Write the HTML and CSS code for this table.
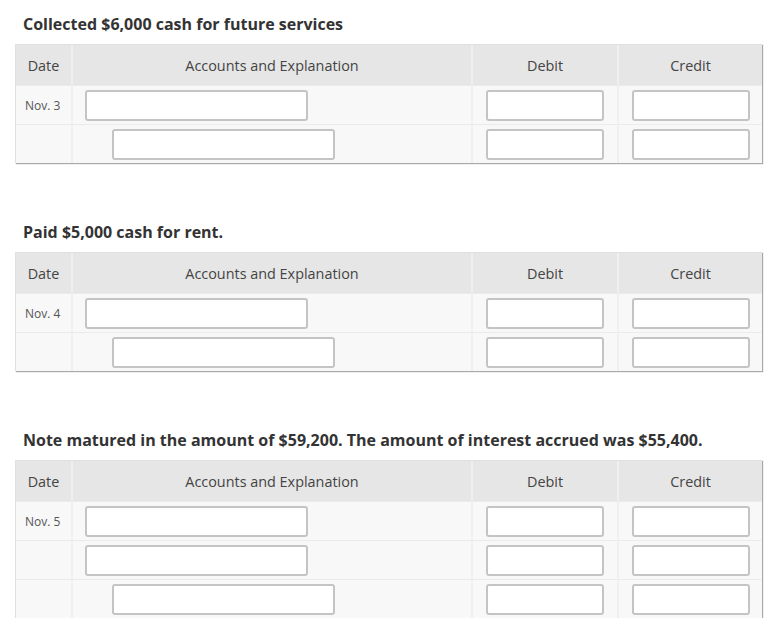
FILE: index.html
```html
<!DOCTYPE html>
<html>
<head>
<meta charset="utf-8">
<link rel="stylesheet" href="styles.css">
</head>
<body>
<section class="entry">
  <h3 class="title">Collected $6,000 cash for future services</h3>
  <div class="journal">
    <div class="row head"><div class="cell c-date">Date</div><div class="cell c-acct">Accounts and Explanation</div><div class="cell c-amt">Debit</div><div class="cell c-amt">Credit</div></div>
    <div class="row"><div class="cell c-date">Nov. 3</div><div class="cell c-acct"><input class="acct"></div><div class="cell c-amt"><input class="amt"></div><div class="cell c-amt"><input class="amt"></div></div>
    <div class="row"><div class="cell c-date"></div><div class="cell c-acct"><input class="acct indent"></div><div class="cell c-amt"><input class="amt"></div><div class="cell c-amt"><input class="amt"></div></div>
  </div>
</section>
<section class="entry">
  <h3 class="title">Paid $5,000 cash for rent.</h3>
  <div class="journal">
    <div class="row head"><div class="cell c-date">Date</div><div class="cell c-acct">Accounts and Explanation</div><div class="cell c-amt">Debit</div><div class="cell c-amt">Credit</div></div>
    <div class="row"><div class="cell c-date">Nov. 4</div><div class="cell c-acct"><input class="acct"></div><div class="cell c-amt"><input class="amt"></div><div class="cell c-amt"><input class="amt"></div></div>
    <div class="row"><div class="cell c-date"></div><div class="cell c-acct"><input class="acct indent"></div><div class="cell c-amt"><input class="amt"></div><div class="cell c-amt"><input class="amt"></div></div>
  </div>
</section>
<section class="entry">
  <h3 class="title">Note matured in the amount of $59,200. The amount of interest accrued was $55,400.</h3>
  <div class="journal">
    <div class="row head"><div class="cell c-date">Date</div><div class="cell c-acct">Accounts and Explanation</div><div class="cell c-amt">Debit</div><div class="cell c-amt">Credit</div></div>
    <div class="row"><div class="cell c-date">Nov. 5</div><div class="cell c-acct"><input class="acct"></div><div class="cell c-amt"><input class="amt"></div><div class="cell c-amt"><input class="amt"></div></div>
    <div class="row"><div class="cell c-date"></div><div class="cell c-acct"><input class="acct"></div><div class="cell c-amt"><input class="amt"></div><div class="cell c-amt"><input class="amt"></div></div>
    <div class="row"><div class="cell c-date"></div><div class="cell c-acct"><input class="acct indent"></div><div class="cell c-amt"><input class="amt"></div><div class="cell c-amt"><input class="amt"></div></div>
  </div>
</section>
</body>
</html>
```

FILE: styles.css
```css
html, body {
  margin: 0;
  padding: 0;
  background: #fff;
}
body {
  font-family: "Open Sans", "Liberation Sans", sans-serif;
  color: #333;
  padding: 13px 0 0 15px;
}
.entry {
  margin-bottom: 58px;
}
.entry:last-child {
  margin-bottom: 0;
}
.title {
  margin: 0 0 9px 8px;
  font-size: 16px;
  line-height: 22px;
  font-weight: 700;
  color: #333;
}
.journal {
  box-sizing: border-box;
  width: 747px;
  border-top: 1px solid #e0e0e0;
  border-left: 1px solid #e0e0e0;
  box-shadow: 1px 1px 1px #a8a8a8;
  background: #f8f8f8;
}
.row {
  display: grid;
  grid-template-columns: 55px 400px 146px 145px;
  height: 39px;
  box-sizing: border-box;
  border-top: 1px solid #ebebeb;
}
.row.head {
  height: 40px;
  border-top: none;
  background: #e6e6e6;
}
.cell {
  box-sizing: border-box;
  display: flex;
  align-items: center;
  border-left: 2px solid #f0f0f0;
}
.cell.c-date {
  border-left: none;
}
.head .cell {
  justify-content: center;
  font-size: 14.4px;
  color: #444;
}
.row:not(.head) .c-date {
  font-size: 12px;
  color: #555;
  padding-left: 9px;
}
.c-amt {
  justify-content: center;
}
input {
  box-sizing: border-box;
  height: 31px;
  border: 2px solid #c4c4c4;
  border-radius: 3px;
  background: #fff;
  margin: 0;
  padding: 0;
  display: block;
  outline: none;
}
input.acct {
  width: 223px;
  margin-left: 12px;
}
input.acct.indent {
  margin-left: 39px;
}
input.amt {
  width: 118px;
}
```
